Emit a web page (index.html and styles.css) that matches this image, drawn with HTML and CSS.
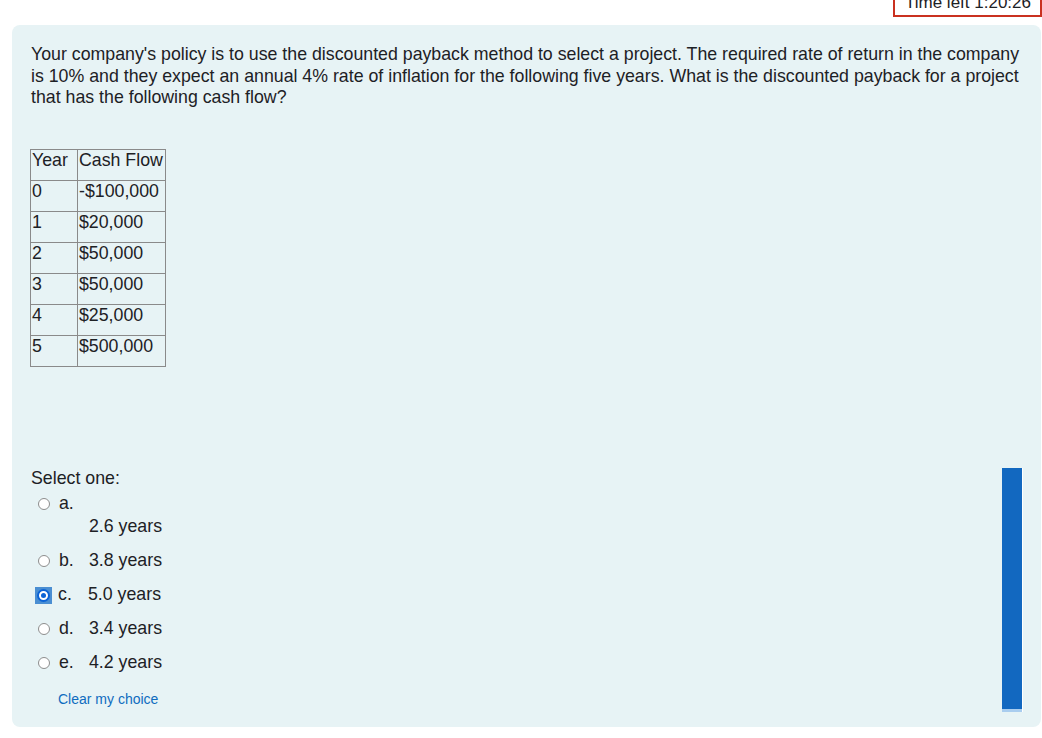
FILE: index.html
```html
<!DOCTYPE html>
<html>
<head>
<meta charset="utf-8">
<link rel="stylesheet" href="styles.css">
</head>
<body>
<div class="timer">Time left 1:20:26</div>
<div class="page">
  <div class="card">
    <div class="qtext">
      <p class="question">Your company's policy is to use the discounted payback method to select a project. The required rate of return in the company is 10% and they expect an annual 4% rate of inflation for the following five years. What is the discounted payback for a project that has the following cash flow?</p>
      <table class="cash">
        <tr><td class="c1">Year</td><td class="c2">Cash Flow</td></tr>
        <tr><td>0</td><td>-$100,000</td></tr>
        <tr><td>1</td><td>$20,000</td></tr>
        <tr><td>2</td><td>$50,000</td></tr>
        <tr><td>3</td><td>$50,000</td></tr>
        <tr><td>4</td><td>$25,000</td></tr>
        <tr><td>5</td><td>$500,000</td></tr>
      </table>
    </div>
    <div class="ablock">
      <div class="prompt">Select one:</div>
      <div class="options">
        <div class="opt">
          <span class="radio"></span>
          <div class="lbl">
            <span class="letter">a.</span>
            <div class="ans block">2.6 years</div>
          </div>
        </div>
        <div class="opt">
          <span class="radio"></span>
          <div class="lbl"><span class="letter">b.</span><span class="ans">3.8 years</span></div>
        </div>
        <div class="opt">
          <span class="radio checked"><span class="dot"></span></span>
          <div class="lbl"><span class="letter">c.</span><span class="ans">5.0 years</span></div>
        </div>
        <div class="opt">
          <span class="radio"></span>
          <div class="lbl"><span class="letter">d.</span><span class="ans">3.4 years</span></div>
        </div>
        <div class="opt">
          <span class="radio"></span>
          <div class="lbl"><span class="letter">e.</span><span class="ans">4.2 years</span></div>
        </div>
      </div>
      <a class="clear" href="#">Clear my choice</a>
    </div>
    <div class="sidebar"></div>
  </div>
</div>
</body>
</html>
```

FILE: styles.css
```css
html, body {
  margin: 0;
  padding: 0;
  background: #ffffff;
  overflow: hidden;
}
body {
  font-family: "Liberation Sans", Arial, sans-serif;
  font-size: 17.75px;
  line-height: 21.5px;
  color: #1d2125;
  width: 1042px;
  height: 738px;
  position: relative;
}
.timer {
  position: absolute;
  top: -11px;
  left: 893px;
  width: 149px;
  box-sizing: border-box;
  border: 2px solid #ca3120;
  padding: 0 8px 0 10px;
  line-height: 24px;
  font-size: 17px;
  white-space: nowrap;
  color: #1d2125;
  background: #fff;
}
.page {
  padding: 25px 0 0 12px;
}
.card {
  position: relative;
  width: 1029px;
  height: 702px;
  box-sizing: border-box;
  background: #e7f3f5;
  border-radius: 8px;
  padding: 19px 0 0 19px;
}
.question {
  margin: 0;
  width: 995px;
}
.cash {
  margin-top: 40px;
  margin-left: -1px;
  border-collapse: collapse;
  table-layout: fixed;
  width: 136px;
}
.cash td {
  border: 1px solid #8a8a8a;
  padding: 0 1px 8.5px 1px;
  vertical-align: top;
  line-height: 21.5px;
  white-space: nowrap;
}
.cash .c1 { width: 44px; }
.ablock {
  margin-top: 101px;
}
.prompt {
  line-height: 21.5px;
}
.options {
  margin-top: 4px;
}
.opt {
  display: flex;
  align-items: flex-start;
  padding-bottom: 12.5px;
}
.radio {
  flex: none;
  box-sizing: border-box;
  width: 12px;
  height: 12px;
  margin: 5px 9px 0 7px;
  border: 1px solid #8d8d8d;
  border-radius: 50%;
  background: #fff;
}
.radio.checked {
  width: 17px;
  height: 17px;
  margin: 3px 6px 0 4px;
  border: none;
  border-radius: 0;
  background: #4a8ed2;
  display: flex;
  align-items: center;
  justify-content: center;
}
.radio.checked .dot {
  box-sizing: border-box;
  width: 13px;
  height: 13px;
  border-radius: 50%;
  background: #fff;
  border: 2px solid #0b63d6;
  display: flex;
  align-items: center;
  justify-content: center;
}
.radio.checked .dot::after {
  content: "";
  width: 5px;
  height: 5px;
  border-radius: 50%;
  background: #0b63d6;
}
.lbl {
  display: block;
}
.letter {
  display: inline-block;
  width: 30px;
}
.ans.block {
  padding-left: 30px;
  margin-top: 1px;
}
.clear {
  display: block;
  margin-top: 4px;
  margin-left: 27px;
  font-size: 14px;
  line-height: 19px;
  color: #0f6cbf;
  text-decoration: none;
}
.sidebar {
  position: absolute;
  left: 990px;
  top: 443px;
  width: 20px;
  height: 241px;
  background: #1268c0;
  border-bottom: 3px solid #a9cdef;
  box-shadow: 1px 0 0 #ffffff;
}
```
